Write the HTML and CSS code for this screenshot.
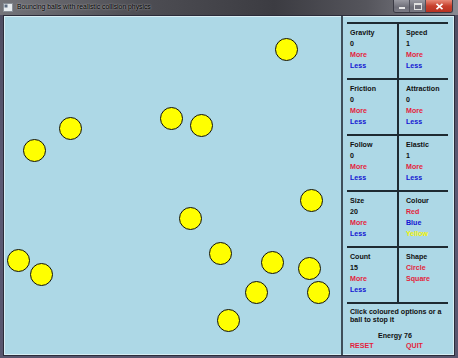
FILE: index.html
```
<!DOCTYPE html>
<html>
<head>
<meta charset="utf-8">
<link rel="stylesheet" href="styles.css">
</head>
<body>
<div class="window">
  <div class="titlebar">
    <svg class="appicon" width="10" height="9" viewBox="0 0 10 9">
      <rect x="0.5" y="0.5" width="9" height="8" fill="#e8ecf0" stroke="#8a9098"/>
      <rect x="1.5" y="1.5" width="3" height="3" fill="#5a6a80"/>
    </svg>
    <span class="title">Bouncing balls with realistic collision physics</span>
    <div class="buttons">
      <div class="btn min"><span class="minbar"></span></div>
      <div class="btn max"><span class="maxbox"></span></div>
      <div class="btn close">
        <svg width="9" height="7" viewBox="0 0 9 7"><path d="M1.5 0.8 L7.5 6.2 M7.5 0.8 L1.5 6.2" stroke="#fff" stroke-width="1.6"/></svg>
      </div>
    </div>
  </div>
  <div class="client">
    <div class="canvas">
      <div class="ball" style="left:271px;top:22px"></div>
      <div class="ball" style="left:55px;top:101px"></div>
      <div class="ball" style="left:19px;top:123px"></div>
      <div class="ball" style="left:156px;top:91px"></div>
      <div class="ball" style="left:186px;top:98px"></div>
      <div class="ball" style="left:296px;top:173px"></div>
      <div class="ball" style="left:175px;top:191px"></div>
      <div class="ball" style="left:205px;top:226px"></div>
      <div class="ball" style="left:3px;top:233px"></div>
      <div class="ball" style="left:26px;top:247px"></div>
      <div class="ball" style="left:257px;top:235px"></div>
      <div class="ball" style="left:294px;top:241px"></div>
      <div class="ball" style="left:241px;top:265px"></div>
      <div class="ball" style="left:303px;top:265px"></div>
      <div class="ball" style="left:213px;top:293px"></div>
    </div>
    <div class="panel">
      <div class="grid">
        <div class="cell c1"><div class="lbl">Gravity</div><div class="lbl">0</div><div class="red">More</div><div class="blue">Less</div></div>
        <div class="cell c2"><div class="lbl">Speed</div><div class="lbl">1</div><div class="red">More</div><div class="blue">Less</div></div>
        <div class="cell c1"><div class="lbl">Friction</div><div class="lbl">0</div><div class="red">More</div><div class="blue">Less</div></div>
        <div class="cell c2"><div class="lbl">Attraction</div><div class="lbl">0</div><div class="red">More</div><div class="blue">Less</div></div>
        <div class="cell c1"><div class="lbl">Follow</div><div class="lbl">0</div><div class="red">More</div><div class="blue">Less</div></div>
        <div class="cell c2"><div class="lbl">Elastic</div><div class="lbl">1</div><div class="red">More</div><div class="blue">Less</div></div>
        <div class="cell c1"><div class="lbl">Size</div><div class="lbl">20</div><div class="red">More</div><div class="blue">Less</div></div>
        <div class="cell c2"><div class="lbl">Colour</div><div class="red">Red</div><div class="blue">Blue</div><div class="yellow">Yellow</div></div>
        <div class="cell c1"><div class="lbl">Count</div><div class="lbl">15</div><div class="red">More</div><div class="blue">Less</div></div>
        <div class="cell c2"><div class="lbl">Shape</div><div class="red">Circle</div><div class="red">Square</div></div>
      </div>
      <div class="footer">
        <div class="hint">Click coloured options or a<br>ball to stop it</div>
        <div class="energy">Energy 76</div>
        <div class="actions"><span class="red act1">RESET</span><span class="red act2">QUIT</span></div>
      </div>
    </div>
  </div>
</div>
</body>
</html>
```
FILE: styles.css
```
html, body {
  margin: 0;
  padding: 0;
  width: 458px;
  height: 358px;
  overflow: hidden;
  background: #5a5870;
}
.window {
  width: 458px;
  height: 358px;
  display: flex;
  flex-direction: column;
  background: linear-gradient(180deg, #4e4c60 0%, #5c5a74 50%, #58566e 100%);
}
.titlebar {
  height: 15px;
  display: flex;
  align-items: flex-start;
  background: linear-gradient(90deg, #74747a 0%, #4e4e54 30%, #3c3c42 60%, #55555c 80%, #8a8a92 100%);
}
.appicon {
  margin: 3px 0 0 3px;
  flex: none;
}
.title {
  margin: 3px 0 0 4px;
  font-family: "Liberation Sans", Arial, sans-serif;
  font-size: 6.8px;
  line-height: 8px;
  color: #000;
  text-shadow: 0 0 2px rgba(255,255,255,0.75);
  white-space: nowrap;
}
.buttons {
  margin-left: auto;
  margin-right: 5px;
  display: flex;
  height: 12px;
  border: 1px solid #3a3a44;
  border-top: none;
  border-radius: 0 0 3px 3px;
  overflow: hidden;
}
.btn {
  height: 12px;
  display: flex;
  align-items: center;
  justify-content: center;
}
.min, .max {
  width: 15px;
  background: linear-gradient(180deg, #9a9aa2 0%, #6e6e78 60%, #7a7a84 100%);
  border-right: 1px solid #50505a;
}
.minbar {
  width: 6px;
  height: 2px;
  background: #e8e8e8;
  margin-top: 4px;
}
.maxbox {
  width: 6px;
  height: 4px;
  border: 1px solid #e0e0e0;
  border-top-width: 2px;
}
.close {
  width: 26px;
  background: linear-gradient(180deg, #e88a78 0%, #c7402c 50%, #b83222 100%);
}
.client {
  margin: 0 3px 0 3px;
  height: 339px;
  border: 1px solid #2c2c3a;
  box-shadow: inset 0 0 0 1px #d8eef4;
  background: #add8e6;
  display: flex;
}
.canvas {
  position: relative;
  width: 337px;
  height: 100%;
  flex: none;
  overflow: hidden;
}
.ball {
  position: absolute;
  width: 23px;
  height: 23px;
  box-sizing: border-box;
  border-radius: 50%;
  border: 1.6px solid #101010;
  background: #ffff00;
}
.panel {
  flex: 1;
  border-left: 2px solid #3e4e5a;
  padding: 6px 0 0 4px;
  font-family: "Liberation Sans", Arial, sans-serif;
  font-size: 7.1px;
  font-weight: bold;
  color: #101010;
}
.grid {
  width: 101px;
  display: grid;
  grid-template-columns: 50px 51px;
  border-bottom: 2px solid #1e2a32;
}
.cell {
  border-top: 2px solid #1e2a32;
  padding-top: 4px;
  box-sizing: border-box;
  height: 56px;
  line-height: 11px;
  white-space: nowrap;
}
.c1 {
  padding-left: 3px;
}
.c2 {
  border-left: 2px solid #1e2a32;
  padding-left: 7px;
}
.red { color: #e41e3c; }
.blue { color: #1414d2; }
.yellow { color: #f4f400; }
.footer {
  width: 101px;
}
.hint {
  padding: 4px 0 0 3px;
  line-height: 8px;
  white-space: nowrap;
}
.energy {
  margin-top: 7px;
  padding-left: 31px;
  line-height: 10px;
}
.actions {
  display: grid;
  grid-template-columns: 52px 49px;
  line-height: 11px;
}
.act1 { padding-left: 3px; }
.act2 { padding-left: 7px; }
```
